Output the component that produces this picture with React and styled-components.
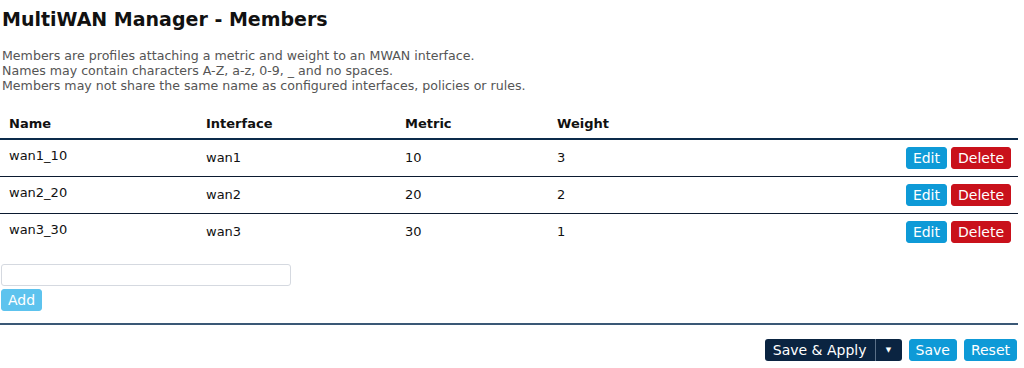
import styled, { createGlobalStyle } from "styled-components";

const GlobalStyle = createGlobalStyle`
  body {
    margin: 0;
    background: #fff;
    font-family: "DejaVu Sans", "Liberation Sans", sans-serif;
    color: #111;
  }
`;

const members = [
  { name: "wan1_10", iface: "wan1", metric: "10", weight: "3" },
  { name: "wan2_20", iface: "wan2", metric: "20", weight: "2" },
  { name: "wan3_30", iface: "wan3", metric: "30", weight: "1" },
];

export default function App() {
  return (
    <>
      <GlobalStyle />
      <Page>
        <Title>MultiWAN Manager - Members</Title>
        <Description>
          Members are profiles attaching a metric and weight to an MWAN interface.
          <br />
          Names may contain characters A-Z, a-z, 0-9, _ and no spaces.
          <br />
          Members may not share the same name as configured interfaces, policies or rules.
        </Description>

        <Table>
          <colgroup>
            <Col $w="197px" />
            <Col $w="199px" />
            <Col $w="152px" />
            <Col $w="200px" />
            <Col />
          </colgroup>
          <thead>
            <tr>
              <Th>Name</Th>
              <Th>Interface</Th>
              <Th>Metric</Th>
              <Th>Weight</Th>
              <Th />
            </tr>
          </thead>
          <tbody>
            {members.map((m) => (
              <Row key={m.name}>
                <NameCell>{m.name}</NameCell>
                <Td>{m.iface}</Td>
                <Td>{m.metric}</Td>
                <Td>{m.weight}</Td>
                <ActionCell>
                  <Button $variant="edit">Edit</Button>
                  <Button $variant="delete">Delete</Button>
                </ActionCell>
              </Row>
            ))}
          </tbody>
        </Table>

        <AddSection>
          <TextInput type="text" />
          <Button $variant="add">Add</Button>
        </AddSection>

        <Footer>
          <SplitButton>
            <SplitMain>Save &amp; Apply</SplitMain>
            <SplitArrow>▼</SplitArrow>
          </SplitButton>
          <Button $variant="edit">Save</Button>
          <Button $variant="edit">Reset</Button>
        </Footer>
      </Page>
    </>
  );
}

const Page = styled.div`
  width: 1018px;
  padding-top: 7px;
`;

const Title = styled.h2`
  margin: 0 0 0 2px;
  font-size: 19px;
  font-weight: 600;
  line-height: 24px;
  color: #111;
`;

const Description = styled.p`
  margin: 17px 0 0 2px;
  font-size: 12.6px;
  line-height: 15px;
  color: #555;
`;

const Table = styled.table`
  width: 100%;
  margin-top: 16px;
  border-collapse: collapse;
  table-layout: fixed;
`;

const Col = styled.col`
  width: ${(p) => p.$w || "auto"};
`;

const Th = styled.th`
  text-align: left;
  font-size: 13px;
  font-weight: 600;
  line-height: 17px;
  padding: 6px 9px;
  border-bottom: 2px solid #0c2b4b;
  color: #111;
`;

const Row = styled.tr`
  height: 37px;

  &:last-child td {
    border-bottom: none;
  }
`;

const Td = styled.td`
  font-size: 13px;
  padding: 0 9px;
  vertical-align: middle;
  border-bottom: 1px solid #0b1a30;
  color: #111;
`;

const NameCell = styled(Td)`
  vertical-align: top;
  padding-top: 8px;
`;

const ActionCell = styled(Td)`
  text-align: right;
  white-space: nowrap;
  padding-right: 7px;

  & > * + * {
    margin-left: 4px;
  }
`;

const colors = {
  edit: "#0e9ad7",
  delete: "#c9111b",
  add: "#5dc3ee",
};

const Button = styled.button`
  font-family: "DejaVu Sans", "Liberation Sans", sans-serif;
  font-size: 14px;
  line-height: 20px;
  height: 22px;
  padding: 0 6px;
  border: 1px solid ${(p) => colors[p.$variant]};
  border-radius: 3px;
  background: ${(p) => colors[p.$variant]};
  color: #fff;
  cursor: pointer;
`;

const AddSection = styled.div`
  display: flex;
  flex-direction: column;
  align-items: flex-start;
  gap: 3px;
  margin-top: 14px;
  padding-left: 1px;
`;

const TextInput = styled.input`
  width: 290px;
  height: 22px;
  box-sizing: border-box;
  border: 1px solid #d5d9e0;
  border-radius: 3px;
`;

const Footer = styled.div`
  display: flex;
  justify-content: flex-end;
  align-items: center;
  gap: 7px;
  margin-top: 12px;
  padding-top: 14px;
  padding-right: 1px;
  border-top: 2px solid #3a5876;
`;

const SplitButton = styled.div`
  display: flex;
  height: 22px;
  border-radius: 3px;
  overflow: hidden;
  background: #0a2441;
`;

const SplitMain = styled.span`
  padding: 0 8px;
  font-size: 14px;
  line-height: 22px;
  color: #fff;
  border-right: 1px solid #5a7088;
`;

const SplitArrow = styled.span`
  width: 26px;
  text-align: center;
  font-size: 7px;
  line-height: 22px;
  color: #fff;
`;
